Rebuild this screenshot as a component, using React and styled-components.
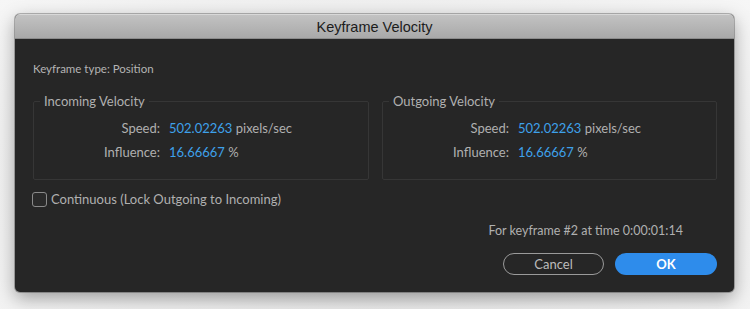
import React from "react";
import styled, { createGlobalStyle } from "styled-components";

const Global = createGlobalStyle`
  html, body { margin: 0; padding: 0; }
  body {
    background: radial-gradient(ellipse at 50% 60%, #d6d6d6 0%, #ececec 55%, #f6f6f6 100%);
    width: 750px;
    height: 309px;
    overflow: hidden;
    font-family: Lato, "Open Sans", sans-serif;
  }
`;

const Stage = styled.div`
  padding: 14px 0 0 15px;
`;

const Window = styled.div`
  width: 719px;
  height: 278px;
  border-radius: 5px;
  overflow: hidden;
  box-sizing: border-box;
  display: flex;
  flex-direction: column;
  box-shadow: 0 6px 18px rgba(0, 0, 0, 0.35), 0 0 0 1px rgba(0, 0, 0, 0.25);
  background: #262626;
`;

const TitleBar = styled.div`
  height: 25px;
  flex: none;
  box-sizing: border-box;
  background: linear-gradient(#c2c2c2, #a9a9a9);
  border-top: 1px solid #d8d8d8;
  border-bottom: 1px solid #8c8c8c;
  display: flex;
  align-items: center;
  justify-content: center;
  font-family: "Liberation Sans", Arial, sans-serif;
  font-size: 14.5px;
  color: #1c1c1c;
`;

const Body = styled.div`
  flex: 1;
  display: flex;
  flex-direction: column;
  padding: 0 17px 0 18px;
  color: #b4b4b4;
`;

const TypeLine = styled.div`
  font-size: 11.5px;
  line-height: 14px;
  margin-top: 23px;
`;

const Groups = styled.div`
  display: grid;
  grid-template-columns: 336px 335px;
  column-gap: 13px;
  margin-top: 17px;
`;

const Group = styled.fieldset`
  margin: 0;
  padding: 4px 0 0 0;
  min-width: 0;
  height: 87px;
  box-sizing: border-box;
  border: 1px solid #363636;
  border-radius: 2px;
`;

const Legend = styled.legend`
  margin-left: 6px;
  padding: 0 4px;
  font-size: 13px;
  line-height: 16px;
  color: #b0b0b0;
`;

const Rows = styled.div`
  display: grid;
  grid-template-columns: 126px auto;
  column-gap: 9px;
  row-gap: 8px;
  justify-content: start;
  margin-top: 7px;
  font-size: 13px;
  line-height: 16px;
`;

const Label = styled.span`
  text-align: right;
  color: #b0b0b0;
`;

const Value = styled.span`
  color: #b0b0b0;
`;

const Num = styled.span`
  color: #3ea1ea;
`;

const CheckRow = styled.label`
  display: flex;
  align-items: center;
  gap: 4px;
  margin-top: 11px;
  margin-left: -1px;
  font-size: 13px;
  line-height: 16px;
  color: #b0b0b0;
`;

const Box = styled.span`
  width: 15px;
  height: 15px;
  box-sizing: border-box;
  border: 1.5px solid #8a8a8a;
  border-radius: 3px;
  background: #2a2a2a;
`;

const Footer = styled.div`
  display: flex;
  flex-direction: column;
  align-items: flex-end;
  margin-top: 16px;
`;

const FooterText = styled.div`
  font-size: 12.5px;
  line-height: 16px;
  color: #b0b0b0;
  margin-right: 34px;
`;

const Buttons = styled.div`
  display: flex;
  gap: 11px;
  margin-top: 14px;
`;

const Button = styled.button`
  width: ${(p) => (p.$primary ? "102px" : "101px")};
  height: 22px;
  box-sizing: border-box;
  border-radius: 11px;
  font-family: Lato, "Open Sans", sans-serif;
  font-size: 13px;
  padding: 0;
  border: ${(p) => (p.$primary ? "none" : "1.5px solid #9a9a9a")};
  background: ${(p) => (p.$primary ? "#2e8ceb" : "transparent")};
  color: ${(p) => (p.$primary ? "#ffffff" : "#bcbcbc")};
  font-weight: ${(p) => (p.$primary ? 700 : 400)};
`;

function VelocityGroup({ title }) {
  return (
    <Group>
      <Legend>{title}</Legend>
      <Rows>
        <Label>Speed:</Label>
        <Value>
          <Num>502.02263</Num> pixels/sec
        </Value>
        <Label>Influence:</Label>
        <Value>
          <Num>16.66667</Num> %
        </Value>
      </Rows>
    </Group>
  );
}

export default function App() {
  return (
    <>
      <Global />
      <Stage>
        <Window>
          <TitleBar>Keyframe Velocity</TitleBar>
          <Body>
            <TypeLine>Keyframe type: Position</TypeLine>
            <Groups>
              <VelocityGroup title="Incoming Velocity" />
              <VelocityGroup title="Outgoing Velocity" />
            </Groups>
            <CheckRow>
              <Box />
              Continuous (Lock Outgoing to Incoming)
            </CheckRow>
            <Footer>
              <FooterText>For keyframe #2 at time 0:00:01:14</FooterText>
              <Buttons>
                <Button>Cancel</Button>
                <Button $primary>OK</Button>
              </Buttons>
            </Footer>
          </Body>
        </Window>
      </Stage>
    </>
  );
}
